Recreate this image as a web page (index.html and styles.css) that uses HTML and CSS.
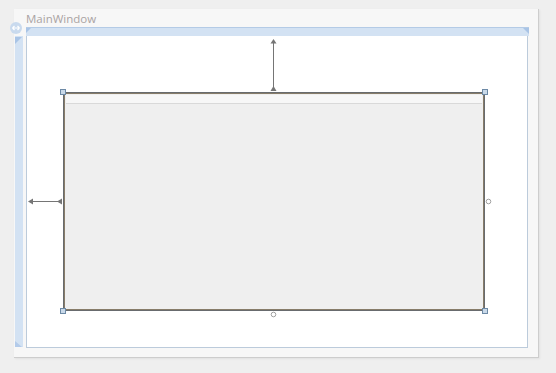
FILE: index.html
```html
<!DOCTYPE html>
<html>
<head>
<meta charset="utf-8">
<link rel="stylesheet" href="styles.css">
</head>
<body>
<div class="panel">
  <div class="title">MainWindow</div>
  <div class="move-icon">
    <svg width="12" height="12" viewBox="0 0 12 12">
      <circle cx="6" cy="6" r="6" fill="#c9daee"/>
      <path d="M2.5 6 H9.5 M2.5 6 L4.5 4 M2.5 6 L4.5 8 M9.5 6 L7.5 4 M9.5 6 L7.5 8" stroke="#ffffff" stroke-width="1.2" fill="none"/>
    </svg>
  </div>
  <div class="frame">
    <div class="top-bar"><span class="tri tl"></span><span class="tri tr"></span></div>
    <div class="left-bar"><span class="tri lt"></span><span class="tri lb"></span></div>
    <div class="window">
      <svg class="adorners" width="501" height="312" viewBox="0 0 501 312">
        <g stroke="#757575" fill="#757575" stroke-width="1">
          <line x1="246.5" y1="4" x2="246.5" y2="54"/>
          <polygon points="246.5,3 243.5,7.5 249.5,7.5" stroke="none"/>
          <polygon points="246.5,50 243.5,55 249.5,55" stroke="none"/>
          <line x1="3" y1="165.5" x2="35" y2="165.5"/>
          <polygon points="1,165.5 6,162.5 6,168.5" stroke="none"/>
          <polygon points="30,165.5 35,162.5 35,168.5" stroke="none"/>
        </g>
        <circle cx="461.5" cy="165.5" r="2.3" fill="#ffffff" stroke="#a0a0a0" stroke-width="1"/>
        <circle cx="246.5" cy="278.5" r="2.3" fill="#ffffff" stroke="#a0a0a0" stroke-width="1"/>
      </svg>
      <div class="grid-el">
        <div class="grid-head"></div>
        <div class="grid-body"></div>
        <span class="handle h-tl"></span>
        <span class="handle h-tr"></span>
        <span class="handle h-bl"></span>
        <span class="handle h-br"></span>
      </div>
    </div>
  </div>
</div>
</body>
</html>
```
FILE: styles.css
```css
html, body {
  margin: 0;
  padding: 0;
}
body {
  width: 556px;
  height: 373px;
  background: #efefef;
  overflow: hidden;
  font-family: "Open Sans", "Noto Sans", sans-serif;
  padding-top: 9px;
  padding-left: 14px;
  box-sizing: border-box;
}
.panel {
  position: relative;
  width: 524px;
  height: 348px;
  background: #f7f7f7;
  border-right: 1px solid #cdcdcd;
  border-bottom: 1px solid #cdcdcd;
  box-shadow: 1px 1px 2px rgba(0,0,0,0.06);
}
.title {
  height: 18px;
  padding-left: 12px;
  font-size: 11.5px;
  line-height: 18px;
  color: #aaa3a3;
  box-sizing: border-box;
  padding-top: 1px;
}
.move-icon {
  position: absolute;
  left: -4px;
  top: 13px;
  width: 12px;
  height: 12px;
}
.move-icon svg { display: block; }
.frame {
  display: grid;
  grid-template-columns: 8px 503px;
  grid-template-rows: 9px 312px;
  column-gap: 3px;
  margin-left: 1px;
}
.top-bar {
  grid-column: 2;
  grid-row: 1;
  position: relative;
  background: #d3e2f3;
  border-top: 1px solid #b4cbe6;
  box-sizing: border-box;
}
.left-bar {
  grid-column: 1;
  grid-row: 2;
  position: relative;
  background: #d3e2f3;
  margin-bottom: 1px;
}
.tri {
  position: absolute;
  width: 0;
  height: 0;
}
.tri.tl {
  left: 0;
  top: 0;
  border-top: 5px solid #a9c4e6;
  border-right: 5px solid transparent;
}
.tri.tr {
  right: 0;
  top: 0;
  border-top: 6px solid #a9c4e6;
  border-left: 6px solid transparent;
}
.tri.lt {
  left: 0;
  top: 1px;
  border-top: 7px solid #a9c4e6;
  border-right: 7px solid transparent;
}
.tri.lb {
  left: 0;
  bottom: 0;
  border-bottom: 6px solid #b3cbea;
  border-right: 7px solid transparent;
}
.window {
  grid-column: 2;
  grid-row: 2;
  position: relative;
  background: #ffffff;
  border: 1px solid #bccbdb;
  border-top: none;
  box-sizing: border-box;
  margin-right: 1px;
}
.adorners {
  position: absolute;
  left: 0;
  top: 0;
  display: block;
}
.grid-el {
  position: absolute;
  left: 36px;
  top: 56px;
  width: 422px;
  height: 219px;
  box-sizing: border-box;
  border: 1px solid #686b6e;
  box-shadow: inset 0 0 0 1px #877c69;
  padding: 2px;
  display: flex;
  flex-direction: column;
  background: #efefef;
}
.grid-head {
  height: 8px;
  background: #f7f7f7;
  border-bottom: 1px solid #d9d9d9;
}
.grid-body {
  flex: 1;
  background: #efefef;
}
.handle {
  position: absolute;
  width: 6px;
  height: 6px;
  box-sizing: border-box;
  background: #c9d9e9;
  border: 1px solid #6d8aa6;
}
.h-tl { left: -4px; top: -4px; }
.h-tr { right: -4px; top: -4px; }
.h-bl { left: -4px; bottom: -4px; }
.h-br { right: -4px; bottom: -4px; }
```
